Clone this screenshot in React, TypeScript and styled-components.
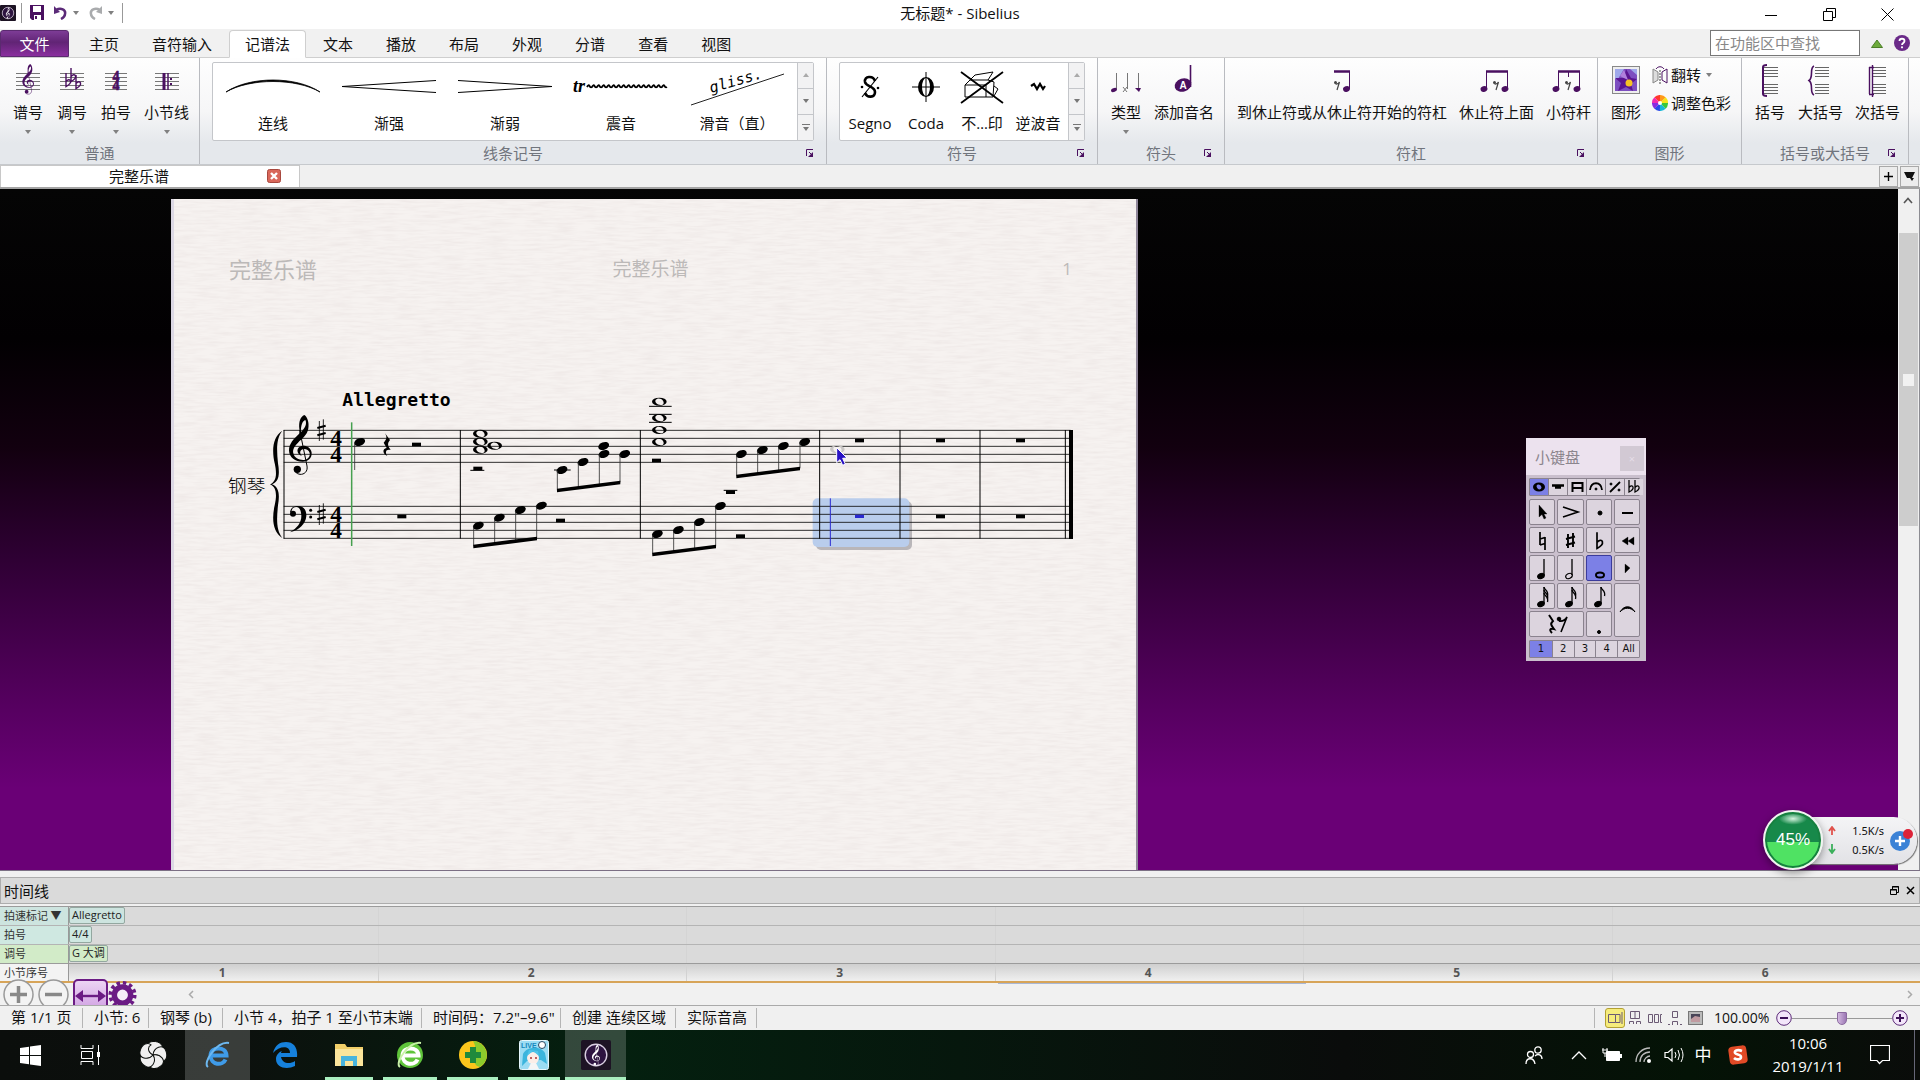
import React from "react";
import styled, { createGlobalStyle, css } from "styled-components";

const UI = `"Open Sans", "Noto Sans CJK SC", sans-serif`;
const PURPLE = "#4a1060";

const GlobalStyle = createGlobalStyle`
  * { box-sizing: border-box; }
  html, body { margin: 0; padding: 0; }
  body { font-family: ${UI}; font-size: 15px; line-height: 20px; color: #111; background: #f0f0f0; overflow: hidden; }
  button, input { font: inherit; color: inherit; margin: 0; }
  button { padding: 0; border: 0; background: none; cursor: default; }
  svg { display: block; flex: none; }
`;

const Shell = styled.div`
  display: flex;
  flex-direction: column;
  height: 100vh;
`;

/* ---------- title bar ---------- */
const TitleBar = styled.header`
  display: grid;
  grid-template-columns: 1fr auto 1fr;
  align-items: center;
  height: 29px;
  background: #fff;
`;
const QuickBar = styled.div`
  display: flex;
  align-items: center;
  height: 24px;
  margin-bottom: 4px;
`;
const QuickButton = styled.button<{ $gap?: number }>`
  display: flex;
  margin-left: ${(p) => p.$gap ?? 8}px;
`;
const QuickRule = styled.span<{ $gap: number }>`
  width: 1px;
  height: 20px;
  margin-left: ${(p) => p.$gap}px;
  background: #999;
`;
const Title = styled.h1`
  margin: 0;
  padding-bottom: 4px;
  font-size: 15px;
  font-weight: 400;
  line-height: 20px;
`;
const WindowButtons = styled.div`
  display: flex;
  justify-content: flex-end;
  padding-right: 4px;
`;
const WindowButton = styled.button`
  display: grid;
  place-items: center;
  width: 58px;
  height: 28px;
`;

/* ---------- tab strip ---------- */
const TabStrip = styled.nav`
  display: flex;
  align-items: flex-end;
  height: 29px;
  background: #f1f1f1;
  border-bottom: 1px solid #cfcfcf;
`;
const RibbonTab = styled.button<{ $on?: boolean }>`
  height: 28px;
  margin: 0 1px -1px 0;
  padding: 0 15px;
  border: 1px solid transparent;
  border-radius: 4px 4px 0 0;
  ${(p) => p.$on && css`background: #fff; border-color: #cfcfcf; border-bottom-color: #fff;`}
`;
const FileTab = styled.button`
  width: 69px;
  height: 27px;
  margin-right: 4px;
  color: #fff;
  border-radius: 3px 3px 0 0;
  border: 1px solid #5b2a70;
  background: linear-gradient(#7d3c96, #612475 45%, #8a2f9e);
`;
const SearchArea = styled.div`
  display: flex;
  align-items: center;
  height: 28px;
  margin-left: auto;
  padding-right: 10px;
  gap: 11px;
`;
const SearchBox = styled.input`
  width: 150px;
  height: 26px;
  padding: 0 4px;
  border: 1px solid #777;
  background: #fff;
  &::placeholder { color: #888; opacity: 1; }
`;
const PlainIcon = styled.button`
  display: flex;
`;

/* ---------- ribbon ---------- */
const Ribbon = styled.section`
  display: flex;
  height: 107px;
  background: linear-gradient(#fefefe, #f6f6f7 50%, #e5e8ec 80%);
  border-bottom: 1px solid #c6c9cd;
`;
const Group = styled.div<{ $w: number }>`
  display: flex;
  flex-direction: column;
  justify-content: space-between;
  min-width: ${(p) => p.$w}px;
  border-right: 1px solid #b9bbc0;
`;
const GroupBody = styled.div<{ $pad?: number }>`
  display: flex;
  align-items: flex-start;
  padding: 4px ${(p) => p.$pad ?? 0}px 0 ${(p) => p.$pad ?? 6}px;
`;
const GroupLabel = styled.div`
  display: grid;
  grid-template-columns: 24px 1fr 24px;
  align-items: center;
  height: 20px;
  margin-bottom: 1px;
  color: #71757d;
  & > span { grid-column: 2; text-align: center; }
`;
const BigButton = styled.button`
  display: flex;
  flex-direction: column;
  align-items: center;
  min-width: 44px;
  padding: 1px 6px 0;
  white-space: nowrap;
  & > svg + span { margin-top: 5px; }
`;
const Caret = styled.i`
  width: 0;
  height: 0;
  margin-top: 8px;
  border: 3px solid transparent;
  border-top: 4px solid #808080;
  border-bottom: 0;
`;
const SmallCaret = styled(Caret)`
  margin: 0 0 0 2px;
`;
const QuickCaret = styled(Caret)`
  margin: 0;
`;
const Gallery = styled.div`
  display: flex;
  height: 79px;
  border: 1px solid #c4c6ca;
  border-radius: 2px;
  background: #fff;
`;
const GalleryItems = styled.div`
  display: flex;
  padding: 0 2px;
`;
const GalleryItem = styled.button<{ $w: number }>`
  display: flex;
  flex-direction: column;
  align-items: center;
  width: ${(p) => p.$w}px;
  padding-top: 3px;
  white-space: nowrap;
  & > svg { margin-bottom: 3px; }
`;
const GalleryScroll = styled.div`
  display: flex;
  flex-direction: column;
  width: 16px;
  border-left: 1px solid #c4c6ca;
`;
const ScrollStep = styled.button`
  display: grid;
  place-items: center;
  flex: 1;
  background: #f2f2f3;
  & + & { border-top: 1px solid #c4c6ca; }
`;
const SmallStack = styled.div`
  display: flex;
  flex-direction: column;
  gap: 8px;
  padding: 3px 0 0 4px;
`;
const SmallButton = styled.button`
  display: flex;
  align-items: center;
  gap: 3px;
  height: 20px;
`;

/* ---------- document tabs ---------- */
const DocTabs = styled.div`
  display: flex;
  align-items: flex-end;
  height: 24px;
  background: #f0f0f0;
  border-bottom: 2px solid #a4a4a4;
`;
const DocTab = styled.div`
  display: grid;
  grid-template-columns: 1fr auto;
  align-items: center;
  width: 300px;
  height: 22px;
  padding: 0 18px 2px 10px;
  text-align: center;
  background: #fff;
  border: 1px solid #c8c8c8;
  border-bottom: 0;
`;
const DocTools = styled.div`
  display: flex;
  gap: 2px;
  margin-left: auto;
  padding-right: 1px;
`;
const DocTool = styled.button`
  display: grid;
  place-items: center;
  width: 19px;
  height: 21px;
  border: 1px solid #a9a9a9;
  background: #ececec;
`;

/* ---------- work area ---------- */
const Work = styled.main`
  position: relative;
  display: flex;
  flex: 1;
  min-height: 0;
  border-bottom: 1px solid #7b6f84;
`;
const Desk = styled.div`
  flex: 1;
  padding: 10px 0 0 171px;
  overflow: hidden;
  background: linear-gradient(#050505 0, #020002 22%, #12000f 38%, #2e0033 54%, #560060 76%, #6a0076 88%);
`;
const Paper = styled.article`
  position: relative;
  width: 965px;
  height: 100%;
  background: #f6f2f0;
  border-left: 3px solid #dcd8e4;
  box-shadow: 2px 0 0 #8f8699;
`;
const Grain = styled.svg`
  position: absolute;
  inset: 0;
`;
const PaperHead = styled.div`
  position: relative;
  display: grid;
  grid-template-columns: 1fr auto 1fr;
  align-items: center;
  padding: 56px 64px 0 55px;
  line-height: 28px;
  color: #bcb9b8;
`;
const HeadLeft = styled.span`
  font-size: 22px;
`;
const HeadMid = styled.span`
  font-size: 19px;
`;
const HeadRight = styled.span`
  font-size: 17px;
  text-align: right;
`;
const Score = styled.svg`
  position: absolute;
  left: 26px;
  top: 171px;
`;
const VScroll = styled.div`
  display: flex;
  flex-direction: column;
  align-items: center;
  width: 22px;
  padding: 8px 1px 0 0;
  background: #f0f0f0;
  border-right: 1px solid #8c8c92;
`;
const VThumb = styled.div`
  display: grid;
  place-items: center;
  width: 19px;
  height: 293px;
  margin-top: 29px;
  background: #cdcdcd;
  &::after { content: ""; width: 11px; height: 12px; background: #f1f1f1; }
`;

/* ---------- keypad ---------- */
const Keypad = styled.aside`
  position: absolute;
  right: 274px;
  top: 249px;
  width: 120px;
  padding: 0 6px 3px 3px;
  background: #cabfcd;
`;
const KeypadHead = styled.div`
  display: flex;
  align-items: center;
  justify-content: space-between;
  height: 37px;
  margin: 0 -6px 3px -3px;
  padding: 0 2px 0 9px;
  color: #8b858d;
  background: #ece2ee;
`;
const KeypadClose = styled.button`
  width: 24px;
  height: 25px;
  margin-top: 4px;
  font-size: 11px;
  color: #e6dde8;
  background: #d2c9d4;
`;
const KeyStrip = styled.div<{ $cols: number }>`
  display: grid;
  grid-template-columns: repeat(${(p) => p.$cols}, 1fr);
  height: 18px;
  border: 1px solid #8a828e;
  border-radius: 1px;
  font-family: "DejaVu Sans", sans-serif;
  font-size: 10px;
  line-height: 16px;
`;
const StripKey = styled.button<{ $on?: boolean }>`
  display: grid;
  place-items: center;
  background: ${(p) => (p.$on ? "#7c80e6" : "#dcd4de")};
  & + & { border-left: 1px solid #8a828e; }
`;
const KeyGrid = styled.div`
  display: grid;
  grid-template-columns: repeat(4, 1fr);
  grid-auto-rows: 26px;
  gap: 2px;
  margin: 3px 0;
`;
const Key = styled.button<{ $on?: boolean; $cols?: number; $rows?: number }>`
  display: grid;
  place-items: center;
  grid-column: span ${(p) => p.$cols ?? 1};
  grid-row: span ${(p) => p.$rows ?? 1};
  border: 1px solid ${(p) => (p.$on ? "#3c3c9c" : "#8a828e")};
  border-radius: 2px;
  background: ${(p) => (p.$on ? "#7c80e6" : "#dcd4de")};
`;

/* ---------- net monitor ---------- */
const Monitor = styled.aside`
  position: absolute;
  right: 3px;
  bottom: 0;
  display: flex;
  align-items: center;
  z-index: 2;
`;
const Ball = styled.div`
  display: grid;
  place-items: center;
  width: 60px;
  height: 60px;
  margin-right: -24px;
  position: relative;
  border: 2px solid #f0f4f0;
  border-radius: 50%;
  color: #fff;
  font-family: "Liberation Sans", sans-serif;
  font-size: 17px;
  background: radial-gradient(ellipse 14px 6px at 50% 12%, #d5f3df, transparent), linear-gradient(#17894a 0 54%, #4fe263 54%);
  box-shadow: inset 0 0 0 2px #16803f, 0 3px 8px #0006;
`;
const Pill = styled.div`
  display: grid;
  grid-template-columns: 8px 1fr 24px;
  column-gap: 6px;
  align-items: center;
  width: 118px;
  height: 47px;
  padding: 0 3px 0 29px;
  border-radius: 0 24px 24px 0;
  background: linear-gradient(#f4f4f6, #e2e2e6);
  box-shadow: 1px 1px 1px #777;
`;
const Rates = styled.div`
  display: flex;
  flex-direction: column;
  text-align: right;
  font-family: "Noto Sans", sans-serif;
  font-size: 11px;
  line-height: 19px;
`;

/* ---------- timeline ---------- */
const Timeline = styled.section`
  position: relative;
  padding-top: 6px;
`;
const TimelineHead = styled.div`
  display: flex;
  align-items: center;
  height: 27px;
  padding: 0 4px 0 3px;
  background: #dadada;
  border: 1px solid #adadad;
  & > span { flex: 1; }
`;
const HeadButton = styled.button`
  display: flex;
  margin-left: 7px;
`;
const Lanes = styled.div`
  margin-top: 2px;
  border-top: 1px solid #9b9b9b;
  border-bottom: 2px solid #d7a458;
`;
const Lane = styled.div<{ $last?: boolean }>`
  display: grid;
  grid-template-columns: 69px 1fr;
  height: 19px;
  border-bottom: 1px solid #b4b4b4;
  ${(p) => p.$last && css`height: 18px; border-top: 1px solid #9b9b9b; margin-top: -1px;`}
`;
const LaneName = styled.div<{ $bg: string }>`
  padding-left: 4px;
  font-family: "Noto Sans CJK SC", sans-serif;
  font-size: 11px;
  line-height: 17px;
  white-space: nowrap;
  color: #333;
  background: ${(p) => p.$bg};
  border-right: 1px solid #999;
`;
const LaneTrack = styled.div<{ $numbers?: boolean }>`
  display: grid;
  grid-template-columns: repeat(6, 1fr);
  background: ${(p) => (p.$numbers ? "linear-gradient(#cfcfcf, #f0f0f0)" : "#dadada")};
`;
const Measure = styled.div`
  text-align: center;
  font-size: 12px;
  font-weight: 700;
  line-height: 17px;
  color: #555;
  padding-right: 2px;
  & + & { border-left: 1px solid #d2d2d2; }
`;
const Chip = styled.span<{ $bg: string }>`
  display: inline-block;
  height: 17px;
  padding: 0 2px;
  border: 1px solid #93a7a0;
  border-radius: 2px;
  background: ${(p) => p.$bg};
  font-size: 11px;
  line-height: 14px;
  color: #222;
`;
const ChipCell = styled.div`
  display: flex;
  & + & { border-left: 1px solid #d4d4d4; }
`;
const TimelineScroll = styled.div`
  display: flex;
  align-items: center;
  justify-content: space-between;
  height: 23px;
  padding: 0 7px 0 188px;
  background: linear-gradient(90deg, transparent 52%, #a9b8d6 52% 68%, transparent 68%) top / 100% 1px no-repeat #f1f1f1;
  border-bottom: 1px solid #aaa;
`;
const TimelineTools = styled.div`
  position: absolute;
  left: 3px;
  bottom: 1px;
  display: flex;
  align-items: flex-start;
  height: 26px;
  overflow: hidden;
`;
const RoundTool = styled.button`
  display: flex;
  margin-right: 4px;
`;
const FitTool = styled.button`
  display: grid;
  place-items: center;
  width: 35px;
  height: 34px;
  border: 2px solid #6b1b84;
  border-radius: 5px;
  background: linear-gradient(#ecd4f4, #cf9fe2);
`;

/* ---------- status bar ---------- */
const Status = styled.footer`
  display: flex;
  align-items: center;
  height: 24px;
  padding-right: 12px;
  background: #f0f0f0;
`;
const StatusItem = styled.span<{ $w: number }>`
  width: ${(p) => p.$w}px;
  height: 20px;
  padding-left: 11px;
  line-height: 19px;
  white-space: nowrap;
  border-right: 1px solid #b5b5b5;
`;
const StatusRight = styled.div`
  display: flex;
  align-items: center;
  margin-left: auto;
  padding-left: 10px;
  border-left: 1px solid #b5b5b5;
`;
const ViewButton = styled.button<{ $on?: boolean }>`
  display: grid;
  place-items: center;
  width: 20px;
  height: 20px;
  border-radius: 3px;
  border: 1px solid ${(p) => (p.$on ? "#b3a032" : "transparent")};
  background: ${(p) => (p.$on ? "#f6ec7c" : "none")};
`;
const Percent = styled.label`
  width: 71px;
  padding-left: 9px;
  font-size: 14px;
`;
const ZoomStep = styled.button`
  display: flex;
`;
const ZoomSlider = styled.input`
  width: 100px;
  height: 18px;
  appearance: none;
  background: linear-gradient(#999, #999) center / 100% 1px no-repeat;
  &::-webkit-slider-thumb {
    appearance: none;
    width: 10px;
    height: 13px;
    border: 1px solid #8b6aa0;
    border-radius: 1px 1px 5px 5px;
    background: linear-gradient(90deg, #d2b8e0, #9c78b4);
  }
`;

/* ---------- taskbar ---------- */
const Taskbar = styled.footer`
  display: flex;
  align-items: stretch;
  height: 50px;
  color: #fff;
  background: linear-gradient(90deg, #0b0e0c 0, #0c100d 12%, #04200f 32%, #06170d 50%, #0a0c0b 70%, #041306 88%, #0a0c0a);
`;
const Task = styled.button<{ $w: number; $run?: boolean; $on?: boolean }>`
  display: grid;
  place-items: center;
  width: ${(p) => p.$w}px;
  background: ${(p) => (p.$on ? "#ffffff30" : "none")};
  position: relative;
  ${(p) => p.$run && css`
    &::after { content: ""; position: absolute; left: ${p.$on ? 0 : 5}px; right: ${p.$on ? 0 : 5}px; bottom: 0; height: 3px; background: #a9efbf; }
  `}
`;
const Tray = styled.div`
  display: flex;
  align-items: center;
  margin-left: auto;
`;
const TrayButton = styled.button<{ $w: number; $after?: number }>`
  display: grid;
  place-items: center;
  width: ${(p) => p.$w}px;
  height: 50px;
  margin-right: ${(p) => p.$after ?? 0}px;
  font-size: 17px;
`;
const Clock = styled.time`
  width: 94px;
  text-align: center;
  line-height: 23px;
`;
const ShowDesktop = styled.button`
  width: 6px;
  height: 50px;
  border-left: 1px solid #667;
`;

/* ---------- shared musical drawings ---------- */
const CLEF =
  "M313 135C322 140 328 158 325 175C322 196 306 206 294 218C284 228 277 238 280 250C283 264 298 271 312 270C326 268 331 258 329 249C327 240 318 236 310 237C300 239 297 250 306 258C292 254 288 238 298 231C312 222 332 230 335 248C336 264 324 275 308 275C286 275 268 262 267 242C266 222 282 206 296 193C300 188 299 183 298 176C296 156 301 140 313 135ZM316 150C308 152 302 166 303 186C314 176 322 162 316 150Z";

const Clef = ({ color = "#000" }: { color?: string }) => (
  <g fill={color}>
    <path d={CLEF} fillRule="evenodd" />
    <path d="M299 180L321 288C324 305 312 314 300 313C290 312 284 305 284 298" fill="none" stroke={color} strokeWidth="3" />
    <circle cx="292" cy="298" r="11" />
  </g>
);

const Head = ({ x, y, s = 1 }: { x: number; y: number; s?: number }) => (
  <ellipse cx={x} cy={y} rx={17 * s} ry={11 * s} transform={`rotate(-22 ${x} ${y})`} />
);
const Whole = ({ x, y }: { x: number; y: number }) => (
  <path
    fillRule="evenodd"
    d={`M${x - 22} ${y}a22 12 0 1 0 44 0a22 12 0 1 0 -44 0ZM${x - 11} ${y - 5}C${x - 7} ${y - 12} ${x + 6} ${y - 11} ${x + 11} ${y - 3}C${x + 16} ${y + 5} ${x + 11} ${y + 11} ${x + 4} ${y + 10}C${x - 6} ${y + 9} ${x - 15} ${y + 2} ${x - 11} ${y - 5}Z`}
  />
);
const Sharp = ({ x, y }: { x: number; y: number }) => (
  <g stroke="#000" fill="none">
    <path d={`M${x - 6} ${y - 28}V${y + 32}M${x + 6} ${y - 33}V${y + 28}`} strokeWidth="2.5" />
    <path d={`M${x - 12} ${y - 7}L${x + 13} ${y - 14}M${x - 12} ${y + 15}L${x + 13} ${y + 8}`} strokeWidth="6" />
  </g>
);
const Run = ({ notes, from, to, drop }: { notes: number[][]; from: number; to: number; drop: number }) => (
  <g>
    {notes.map(([x, y], i) => {
      const end = from + ((to - from) * (x - notes[0][0])) / drop;
      return (
        <g key={i}>
          <Head x={x} y={y} />
          <path d={`M${x - 14} ${y + 2}V${end}`} stroke="#333" strokeWidth="2.5" />
        </g>
      );
    })}
    <path
      d={`M${notes[0][0] - 15} ${from - 5}L${notes[0][0] + drop - 13} ${to - 5}v11L${notes[0][0] - 15} ${from + 6}Z`}
    />
  </g>
);

const STAFF = [181, 205, 229, 253, 277, 409, 433, 457, 481, 505];
const REST_BARS = [
  [636, 218], [592, 434], [820, 290], [1068, 446], [1356, 266], [1608, 493], [1578, 361],
  [1965, 206], [2208, 206], [2448, 206], [2208, 434], [2448, 434],
];

const ScoreDrawing = () => (
  <Score width="880" height="200" viewBox="0 0 2640 600" role="img" aria-label="钢琴">
    <rect x="1848" y="394" width="288" height="146" rx="15" fill="#b9b6b9" />
    <rect x="1838" y="385" width="290" height="146" rx="15" fill="#b9cdec" />
    <g stroke="#111" strokeWidth="2.6">
      {STAFF.map((y) => (
        <path key={y} d={`M251 ${y}H2612`} />
      ))}
    </g>
    <path d="M252 180V506M781 180V506M1321 180V506M1859 180V506M2100 180V506M2340 180V506M2596 180V506" stroke="#000" strokeWidth="3" />
    <rect x="2607" y="180" width="12" height="327" />
    <path d="M247 182C218 200 215 240 224 280C232 315 228 335 210 343C228 351 232 371 224 406C215 446 218 486 247 504C228 480 230 446 234 406C240 371 236 351 216 343C236 335 240 315 234 280C230 240 228 206 247 182Z" />
    <Clef />
    <path d="M270 428C271 412 284 408 294 408C310 408 320 420 319 438C317 462 298 480 270 487C292 474 305 458 304 436C303 420 298 411 289 411C280 411 275 417 275 424Z" />
    <circle cx="279" cy="431" r="9" />
    <circle cx="332" cy="421" r="4.5" />
    <circle cx="332" cy="441" r="4.5" />
    <Sharp x={364} y={181} />
    <Sharp x={364} y={433} />
    <g fontFamily="Liberation Serif, serif" fontWeight="700" fontSize="70" textAnchor="middle">
      <text x="408" y="228">4</text>
      <text x="408" y="276">4</text>
      <text x="408" y="456">4</text>
      <text x="408" y="504">4</text>
    </g>
    <text x="427" y="107" fontFamily="DejaVu Sans Mono, monospace" fontWeight="700" fontSize="54">Allegretto</text>
    <text x="84" y="369" fontFamily="Noto Sans CJK SC, sans-serif" fontWeight="300" fontSize="56">钢琴</text>
    <path d="M455 157V528" stroke="#46a04f" strokeWidth="4.5" />
    <Head x={479} y={216} />
    <path d="M464 218V300" stroke="#333" strokeWidth="2.5" />
    <path d="M555 190L570 210C562 220 562 226 572 240C558 236 554 246 562 258C548 252 546 236 560 234L551 218C560 208 562 202 555 190Z" />
    {REST_BARS.map(([x, y]) => (
      <rect key={`${x}-${y}`} x={x} y={y} width="27" height="11" />
    ))}
    <path d="M811 301H853M1062 300H1112M1571 361H1612M1347 109H1415M1347 133H1415M1347 157H1415" stroke="#000" strokeWidth="3" />
    <Whole x={841} y={191} />
    <Whole x={841} y={215} />
    <Whole x={841} y={239} />
    <Whole x={884} y={227} />
    <Run notes={[[1086, 300], [1149, 276], [1212, 252], [1274, 252]]} from={361} to={337} drop={188} />
    <Head x={1211} y={228} />
    <Run notes={[[835, 467], [898, 443], [961, 420], [1024, 407]]} from={529} to={505} drop={189} />
    <Whole x={1378} y={95} />
    <Whole x={1378} y={144} />
    <Whole x={1378} y={180} />
    <Whole x={1378} y={216} />
    <Run notes={[[1624, 252], [1687, 240], [1750, 228], [1814, 216]]} from={319} to={295} drop={189} />
    <Run notes={[[1372, 492], [1435, 480], [1498, 456], [1561, 408]]} from={553} to={529} drop={189} />
    <rect x="1965" y="434" width="27" height="10" fill="#2a2ad0" />
    <path d="M1891 385V528" stroke="#2a2ad0" strokeWidth="3" />
    <g fill="#c9c6c5"><Whole x={1912} y={238} /></g>
    <path d="M1910 233V278L1920 269L1928 286L1936 282L1928 265L1941 264Z" fill="#2912c4" stroke="#fff" strokeWidth="3" />
  </Score>
);

/* ---------- ribbon icons ---------- */
const IconSvg = styled.svg`
  overflow: visible;
`;
const Icon = ({ w = 32, h = 34, children }: { w?: number; h?: number; children: React.ReactNode }) => (
  <IconSvg width={w} height={h} viewBox={`0 0 ${w} ${h}`} fill="none" aria-hidden="true">{children}</IconSvg>
);
const lines = (x1: number, x2: number) => (
  <path d={`M${x1} 10.5H${x2}M${x1} 14.5H${x2}M${x1} 18.5H${x2}M${x1} 22.5H${x2}M${x1} 26.5H${x2}`} stroke="#777" />
);
const Flat = ({ x, y, c = PURPLE, k = 1 }: { x: number; y: number; c?: string; k?: number }) => (
  <path transform={`translate(${x} ${y}) scale(${k})`} d="M0 -9V4.500C3 3 5 1 4.500 -1C4 -3 1.500 -2.500 0 -.5" stroke={c} strokeWidth="1.400" fill="none" />
);
const EighthRest = ({ x, y }: { x: number; y: number }) => (
  <g transform={`translate(${x} ${y})`}>
    <circle cx="1.500" cy="1.500" r="1.500" fill="#444" />
    <path d="M1.500 3C4 3.500 5 2 5.500 1L3 9" stroke="#444" strokeWidth="1.200" />
  </g>
);
const BeamIcon = ({ left, mid }: { left: boolean; mid?: boolean }) => (
  <Icon>
    <path d={left ? "M5 8.500H27" : "M8 8.500H24"} stroke={PURPLE} strokeWidth="2.500" />
    <path d={left ? "M5.500 8V26M26.500 8V26" : "M23.500 8V26"} stroke={PURPLE} />
    {mid && <path d="M15.500 8V14" stroke={PURPLE} />}
    <g fill={PURPLE}>
      {left && <ellipse cx="3" cy="26" rx="3.500" ry="2.800" transform="rotate(-20 3 26)" />}
      <ellipse cx={left ? 24 : 20.5} cy="26" rx="3.500" ry="2.800" transform={`rotate(-20 ${left ? 24 : 20.5} 26)`} />
    </g>
    <EighthRest x={left ? 12 : 8} y={18} />
  </Icon>
);
const BracketIcon = ({ kind }: { kind: "bracket" | "brace" | "sub" }) => (
  <Icon w={28}>
    <path d="M8 4.500H22M8 7.500H22M8 10.500H22M8 13.500H22M8 21.500H22M8 24.500H22M8 27.500H22M8 30.500H22" stroke="#666" />
    {kind === "bracket" && <path d="M11 2C8 2 7 3 7 4V31C7 32 8 33 11 33M7 4V31" stroke={PURPLE} strokeWidth="2" />}
    {kind === "brace" && <path d="M7 3C2 5 7 14 2 17.500C7 21 2 30 7 32" stroke={PURPLE} strokeWidth="1.600" />}
    {kind === "sub" && <path d="M5 4.500H10M5.500 4V31M8.500 2V34M5 31.500H10" stroke={PURPLE} strokeWidth="1.400" />}
  </Icon>
);
const Launch = () => (
  <PlainIcon aria-label="更多选项">
    <svg width="22" height="10" viewBox="0 0 22 10" fill="none">
      <path d="M4.500 8V1.500H11M7 4L10 7" stroke={PURPLE} />
      <path d="M11 4V9H6Z" fill={PURPLE} />
    </svg>
  </PlainIcon>
);
const Footer = ({ text, launch = true }: { text: string; launch?: boolean }) => (
  <GroupLabel>
    <span>{text}</span>
    {launch && <Launch />}
  </GroupLabel>
);
const Steps = () => (
  <GalleryScroll>
    {["M1 5L4 1L7 5Z", "M1 1L4 5L7 1Z", "M1 3L4 7L7 3ZM0 0H8V1H0Z"].map((d, i) => (
      <ScrollStep key={d} aria-label="滚动">
        <svg width="8" height="7" viewBox="0 0 8 7"><path d={d} fill={i ? "#777" : "#aaa"} /></svg>
      </ScrollStep>
    ))}
  </GalleryScroll>
);

const SibeliusMark = ({ size }: { size: number }) => (
  <svg width={size} height={size} viewBox="0 0 32 32" aria-hidden="true">
    <rect width="32" height="32" rx="2" fill="#1d1324" />
    <circle cx="16" cy="16" r="11.500" fill="#2d1440" stroke="#d9cfe2" strokeWidth="1.500" />
    <g transform="translate(-22 -12) scale(.126)"><Clef color="#fff" /></g>
  </svg>
);

const LINES = [
  ["连线", <path key="a" d="M1 26C25 10 71 10 95 26C71 12 25 12 1 26Z" fill="#000" stroke="#000" strokeWidth=".8" />],
  ["渐强", <path key="b" d="M95 14.500L1 20.500L95 26.500" stroke="#000" />],
  ["渐弱", <path key="c" d="M1 14.500L95 20.500L1 26.500" stroke="#000" />],
  [
    "震音",
    <g key="d">
      <text x="0" y="26" fontFamily="Liberation Serif, serif" fontWeight="700" fontStyle="italic" fontSize="18" fill="#000">tr</text>
      <path d={"M14 21" + "q1.500 -3 2.500 -1t2.500 1".repeat(16)} stroke="#000" strokeWidth="1.800" />
    </g>,
  ],
  [
    "滑音（直）",
    <g key="e">
      <path d="M2 39L95 8" stroke="#222" />
      <text x="22" y="27" transform="rotate(-16 22 27)" fontFamily="DejaVu Sans Mono, monospace" fontStyle="italic" fontSize="15" fill="#000">gliss.</text>
    </g>,
  ],
] as const;

const SYMBOLS = [
  [
    "Segno",
    <g key="a" stroke="#000">
      <path d="M29 15C27 9 18 10 19 16C20 21 29 20 29 26C29 32 21 32 19 27" strokeWidth="2.600" />
      <path d="M32 11L16 31" strokeWidth="1.200" />
      <circle cx="16" cy="21" r="1.300" fill="#000" stroke="none" /><circle cx="32" cy="22" r="1.300" fill="#000" stroke="none" />
    </g>,
  ],
  [
    "Coda",
    <g key="b" stroke="#000">
      <path d="M24 6V36M10 21H38" />
      <path fillRule="evenodd" d="M16 21a8 10 0 1 0 16 0a8 10 0 1 0 -16 0ZM20 21a4 9 0 1 0 8 0a4 9 0 1 0 -8 0Z" fill="#000" stroke="none" />
    </g>,
  ],
  [
    "不…印",
    <g key="c" stroke="#000">
      <path d="M3 6L45 37M45 6L3 37" strokeWidth="1.800" />
      <path d="M7 19L17 9L35 6L30 14L36 16L35 31H7ZM7 19H28L35 13M28 19V31M12 14L30 14M36 20L40 23L36 30" />
    </g>,
  ],
  ["逆波音", <path key="d" d="M17 20L20 18L23 23L26 18L29 23L31 20" stroke="#000" strokeWidth="2.200" />],
] as const;

/* ---------- keypad glyphs ---------- */
const Glyph = ({ children, w = 22, h = 24 }: { children: React.ReactNode; w?: number; h?: number }) => (
  <svg width={w} height={h} viewBox={`0 0 ${w} ${h}`} fill="none" stroke="#000" aria-hidden="true">{children}</svg>
);
const KNote = ({ flags = 0, open = false }: { flags?: number; open?: boolean }) => (
  <Glyph>
    <ellipse cx="10" cy="20" rx="3.400" ry="2.400" transform="rotate(-25 10 20)" fill={open ? "none" : "#000"} strokeWidth="1.200" />
    <path d="M13 19V3" strokeWidth="1.300" />
    {Array.from({ length: flags }, (_, i) => (
      <path key={i} d={`M13 ${3 + i * 3}c0 3 5 3 3.500 9`} strokeWidth="1.300" />
    ))}
  </Glyph>
);

const KEYS: { id: string; g: React.ReactNode; on?: boolean; c?: number; r?: number }[] = [
  { id: "选择", g: <Glyph><path d="M8 5V17L11 14.500L13 19L15 18L13 14H16Z" fill="#000" strokeWidth=".3" /></Glyph> },
  { id: "重音", g: <Glyph><path d="M4 7L19 12L4 17" strokeWidth="1.600" /></Glyph> },
  { id: "断奏", g: <Glyph><circle cx="12" cy="13" r="2" fill="#000" /></Glyph> },
  { id: "保持", g: <Glyph><path d="M6 13H17" strokeWidth="2" /></Glyph> },
  { id: "还原", g: <Glyph><path d="M9 4V17M14 9V22M9 11L14 9.500M9 17L14 15.500" strokeWidth="1.700" /></Glyph> },
  { id: "升号", g: <Glyph><path d="M9 6V20M14 5V19M7 11L16 8.500M7 17L16 14.500" strokeWidth="1.900" /></Glyph> },
  { id: "降号", g: <Glyph><Flat x={9} y={15} c="#000" k={1.2} /></Glyph> },
  { id: "返回", g: <Glyph><path d="M12 9L6 13L12 17ZM18 9L12 13L18 17Z" fill="#000" strokeWidth=".3" /></Glyph> },
  { id: "四分", g: <KNote /> },
  { id: "二分", g: <KNote open /> },
  { id: "全音符", on: true, g: <Glyph><ellipse cx="12" cy="19" rx="4" ry="2.500" strokeWidth="2" /></Glyph> },
  { id: "前进", g: <Glyph><path d="M9 8L14 12L9 17Z" fill="#000" strokeWidth=".3" /></Glyph> },
  { id: "三十二分", g: <KNote flags={3} /> },
  { id: "十六分", g: <KNote flags={2} /> },
  { id: "八分", g: <KNote flags={1} /> },
  { id: "连音线", r: 2, g: <Glyph><path d="M4 14C8 7 15 7 19 14C15 9 8 9 4 14Z" fill="#000" /></Glyph> },
  { id: "休止符", c: 2, g: <Glyph w={30}><path d="M8 3L12 9C9 12 10 13 13 17C9 16 8 18 11 21" strokeWidth="2" /><circle cx="18" cy="7" r="1.800" fill="#000" /><path d="M18 9Q23 10 26 5L20 20" strokeWidth="1.600" /></Glyph> },
  { id: "附点", g: <Glyph><circle cx="11" cy="20" r="1.500" fill="#000" /></Glyph> },
];
const STRIP = [
  <path key="0" fillRule="evenodd" d="M3 8a6 4.500 0 1 0 12 0a6 4.500 0 1 0 -12 0ZM6.500 7C7 4.500 11 5 11.500 8.500C11 11.500 7 11 6.500 7Z" fill="#000" stroke="none" />,
  <path key="1" d="M3 6.500H15M6 8.500H12" strokeWidth="2.400" />,
  <path key="2" d="M4 4H15M4 9H15M4.500 3V13M14.500 3V13" strokeWidth="2" />,
  <g key="3"><path d="M3 11C4 2 14 2 15 11" strokeWidth="1.800" /><circle cx="9" cy="10" r="1" fill="#000" /></g>,
  <g key="4"><path d="M4 13L14 3" strokeWidth="1.800" /><circle cx="5" cy="5" r="1" fill="#000" /><circle cx="13" cy="11" r="1" fill="#000" /></g>,
  <g key="5"><Flat x={4} y={9} c="#000" k={0.9} /><Flat x={10} y={9} c="#000" k={0.9} /></g>,
];

const VIEWS = [
  "M1.500 4.500H8.500V12.500H1.500ZM8.500 4.500H13V12.500H8.500M15 2V14",
  "M3.500 1.500H12.500V8.500H3.500ZM8 1.500V8.500M2.500 14V11.500H6.500V14M9.500 14V11.500H13.500V14",
  "M1.500 4.500H5.500V12.500H1.500ZM7.500 4.500H11.500V12.500H7.500ZM15 4.500H13.500V12.500H15",
  "M5.500 1.500H10.500V7.500H5.500ZM5.500 15V11.500H10.500V15M1 14.500H3M13 14.500H15",
];

const MEASURES = [1, 2, 3, 4, 5, 6];
const LANES = [
  { name: "拍速标记 ▼", bg: "#cde4df", chip: "Allegretto" },
  { name: "拍号", bg: "#cfe8e1", chip: "4/4" },
  { name: "调号", bg: "#d2ebc8", chip: "G 大调" },
];

const EGlyph = ({ a, b, ring }: { a: string; b: string; ring?: boolean }) => (
  <svg width="30" height="30" viewBox="0 0 30 30" fill="none" aria-hidden="true">
    {ring && <circle cx="15" cy="15" r="13" fill="#5fc43a" />}
    <path d="M7 15.500H23.500C23 6 8 6 7.500 15.500C7.500 25.500 20 26 22.500 19.500" stroke={ring ? "#fff" : a} strokeWidth="4" />
    <path d="M5 27C-1 23 14 1 26 3" stroke={b} strokeWidth="2" />
  </svg>
);

export default function App() {
  return (
    <Shell>
      <GlobalStyle />
      <TitleBar>
        <QuickBar>
          <SibeliusMark size={16} />
          <QuickRule $gap={5} />
          <QuickButton aria-label="保存">
            <svg width="14" height="15" viewBox="0 0 14 15"><path d="M0 0H14V15H2L0 13Z" fill={PURPLE} /><path d="M3 1H11V7H3ZM4 10H11V15H4Z" fill="#fff" /><path d="M5 11H7V14H5Z" fill={PURPLE} /></svg>
          </QuickButton>
          <QuickButton aria-label="撤销" $gap={9}>
            <svg width="14" height="14" viewBox="0 0 14 14" fill="none"><path d="M3 4C8 1 13 4 12 8C12 10 10 12 8 13" stroke="#5b2a78" strokeWidth="2.500" /><path d="M1 0V8L7 6Z" fill="#5b2a78" /></svg>
          </QuickButton>
          <QuickButton aria-label="撤销列表" $gap={6}><QuickCaret /></QuickButton>
          <QuickButton aria-label="重做" $gap={10}>
            <svg width="14" height="14" viewBox="0 0 14 14" fill="none"><path d="M11 4C6 1 1 4 2 8C2 10 4 12 6 13" stroke="#a9abad" strokeWidth="2.500" /><path d="M13 0V8L7 6Z" fill="#a9abad" /></svg>
          </QuickButton>
          <QuickButton aria-label="重做列表" $gap={5}><QuickCaret /></QuickButton>
          <QuickRule $gap={8} />
        </QuickBar>
        <Title>无标题* - Sibelius</Title>
        <WindowButtons>
          <WindowButton aria-label="最小化"><svg width="12" height="12"><path d="M0 6.500H12" stroke="#000" /></svg></WindowButton>
          <WindowButton aria-label="还原"><svg width="13" height="13" fill="none"><path d="M.5 3.500H9.500V12.500H.5ZM3.500 3V.5H12.500V9.500H10" stroke="#000" /></svg></WindowButton>
          <WindowButton aria-label="关闭"><svg width="13" height="13"><path d="M.5 .5L12.500 12.500M12.500 .5L.5 12.500" stroke="#000" /></svg></WindowButton>
        </WindowButtons>
      </TitleBar>

      <TabStrip>
        <FileTab>文件</FileTab>
        {["主页", "音符输入", "记谱法", "文本", "播放", "布局", "外观", "分谱", "查看", "视图"].map((t) => (
          <RibbonTab key={t} $on={t === "记谱法"}>{t}</RibbonTab>
        ))}
        <SearchArea>
          <SearchBox placeholder="在功能区中查找" aria-label="在功能区中查找" />
          <PlainIcon aria-label="折叠功能区"><svg width="12" height="9"><path d="M6 1L11.500 8.500H.5Z" fill="#6dab3c" stroke="#4c7f28" /></svg></PlainIcon>
          <PlainIcon aria-label="帮助">
            <svg width="16" height="16" viewBox="0 0 16 16"><circle cx="8" cy="8" r="8" fill="#6a2a88" /><path d="M5.500 6C5.500 3 10.500 3 10.500 6C10.500 8 8 8 8 10" stroke="#fff" strokeWidth="1.800" fill="none" /><circle cx="8" cy="12.300" r="1.100" fill="#fff" /></svg>
          </PlainIcon>
        </SearchArea>
      </TabStrip>

      <Ribbon>
        <Group $w={200}>
          <GroupBody>
            <BigButton><Icon>{lines(4, 28)}<g transform="translate(-35 -22) scale(.17)"><Clef color={PURPLE} /></g></Icon><span>谱号</span><Caret /></BigButton>
            <BigButton><Icon>{lines(4, 28)}<Flat x={10} y={19} /><Flat x={15} y={14} /><Flat x={20} y={21} /></Icon><span>调号</span><Caret /></BigButton>
            <BigButton>
              <Icon>{lines(5, 27)}<g fill={PURPLE} stroke={PURPLE} strokeWidth=".6" fontFamily="Liberation Serif, serif" fontWeight="700" fontSize="14" textAnchor="middle"><text x="16" y="18">4</text><text x="16" y="27">4</text></g></Icon>
              <span>拍号</span><Caret />
            </BigButton>
            <BigButton><Icon>{lines(4, 28)}<path d="M13 10V27" stroke={PURPLE} strokeWidth="3" /><path d="M17 10V27" stroke={PURPLE} strokeWidth="1.500" /><path d="M20 15V17M20 20V22" stroke={PURPLE} strokeWidth="2" /></Icon><span>小节线</span><Caret /></BigButton>
          </GroupBody>
          <Footer text="普通" launch={false} />
        </Group>
        <Group $w={627}>
          <GroupBody $pad={12}>
            <Gallery>
              <GalleryItems>
                {LINES.map(([name, art]) => (
                  <GalleryItem key={name} $w={116}><Icon w={96} h={44}>{art}</Icon><span>{name}</span></GalleryItem>
                ))}
              </GalleryItems>
              <Steps />
            </Gallery>
          </GroupBody>
          <Footer text="线条记号" />
        </Group>
        <Group $w={271}>
          <GroupBody $pad={12}>
            <Gallery>
              <GalleryItems>
                {SYMBOLS.map(([name, art]) => (
                  <GalleryItem key={name} $w={56}><Icon w={48} h={44}>{art}</Icon><span>{name}</span></GalleryItem>
                ))}
              </GalleryItems>
              <Steps />
            </Gallery>
          </GroupBody>
          <Footer text="符号" />
        </Group>
        <Group $w={127}>
          <GroupBody>
            <BigButton>
              <Icon><path d="M6.500 10V26M17.500 10V26M28.500 10V26" stroke="#777" /><g fill={PURPLE}><Head x={4} y={27} s={0.18} /><path d="M25 25H31L29 29Z" /></g><path d="M13 24L17 29M17 24L13 29" stroke="#777" /></Icon>
              <span>类型</span><Caret />
            </BigButton>
            <BigButton>
              <Icon><path d="M22.500 2V24" stroke={PURPLE} strokeWidth="1.600" /><ellipse cx="15" cy="22" rx="8.500" ry="6.500" transform="rotate(-18 15 22)" fill={PURPLE} /><text x="15" y="26" textAnchor="middle" fontFamily="Liberation Sans, sans-serif" fontWeight="700" fontSize="10" fill="#fff">A</text></Icon>
              <span>添加音名</span>
            </BigButton>
          </GroupBody>
          <Footer text="符头" />
        </Group>
        <Group $w={373}>
          <GroupBody>
            <BigButton><BeamIcon left={false} /><span>到休止符或从休止符开始的符杠</span></BigButton>
            <BigButton><BeamIcon left /><span>休止符上面</span></BigButton>
            <BigButton><BeamIcon left mid /><span>小符杆</span></BigButton>
          </GroupBody>
          <Footer text="符杠" />
        </Group>
        <Group $w={144}>
          <GroupBody>
            <BigButton>
              <Icon>
                <rect x="2.500" y="3.500" width="27" height="27" fill="#eee" stroke="#888" /><rect x="5" y="6" width="22" height="22" fill="#7d4fc0" />
                <path d="M5 6H14L8 16H5ZM20 6H27V12Z" fill="#9fa8ea" /><path d="M16 6L21 15L27 16L21 21L23 28L16 24L8 28L11 20L5 15L14 15Z" fill="#5a1591" /><path d="M14 7L18 17L10 13Z" fill="#b080dc" /><circle cx="19" cy="20" r="3.500" fill="#f6c224" />
              </Icon>
              <span>图形</span>
            </BigButton>
            <SmallStack>
              <SmallButton>
                <svg width="16" height="18" viewBox="0 0 16 18" fill="none"><path d="M1 3L6 6V14L1 17Z" fill="#ddd" stroke="#888" /><path d="M15 3L10 6V14L15 17Z" stroke={PURPLE} /><path d="M8 4V18" stroke="#444" strokeDasharray="2 1" /><path d="M4 3C6 0 10 0 12 3" stroke={PURPLE} /></svg>
                翻转<SmallCaret />
              </SmallButton>
              <SmallButton>
                <svg width="16" height="16" viewBox="0 0 16 16">
                  {["#ff3a2a", "#ff9a1a", "#f4e61a", "#3ac83a", "#18b8d8", "#2a4ae8", "#8a2ae0", "#f02ab0"].map((c, i) => (
                    <path key={c} d="M8 8L4.900 .6A8 8 0 0 1 11.100 .6Z" fill={c} transform={`rotate(${i * 45 - 22} 8 8)`} />
                  ))}
                  <circle cx="8" cy="8" r="2" fill="#fff" />
                </svg>
                调整色彩
              </SmallButton>
            </SmallStack>
          </GroupBody>
          <Footer text="图形" launch={false} />
        </Group>
        <Group $w={167}>
          <GroupBody>
            <BigButton><BracketIcon kind="bracket" /><span>括号</span></BigButton>
            <BigButton><BracketIcon kind="brace" /><span>大括号</span></BigButton>
            <BigButton><BracketIcon kind="sub" /><span>次括号</span></BigButton>
          </GroupBody>
          <Footer text="括号或大括号" />
        </Group>
      </Ribbon>

      <DocTabs>
        <DocTab>
          <span>完整乐谱</span>
          <PlainIcon aria-label="关闭乐谱"><svg width="14" height="14" viewBox="0 0 14 14"><rect x=".5" y=".5" width="13" height="13" rx="2" fill="#d9675a" stroke="#a8483e" /><path d="M4 4L10 10M10 4L4 10" stroke="#fff" strokeWidth="2.400" /></svg></PlainIcon>
        </DocTab>
        <DocTools>
          <DocTool aria-label="新建标签"><svg width="9" height="9"><path d="M4.500 0V9M0 4.500H9" stroke="#000" strokeWidth="1.400" /></svg></DocTool>
          <DocTool aria-label="标签列表"><svg width="11" height="11"><path d="M0 1H11L8 7H3ZM6 7H10L8 10Z" fill="#111" /></svg></DocTool>
        </DocTools>
      </DocTabs>

      <Work>
        <Desk>
          <Paper>
            <Grain width="100%" height="100%" aria-hidden="true">
              <filter id="grain" x="0" y="0" width="100%" height="100%">
                <feTurbulence type="fractalNoise" baseFrequency="0.045 0.42" numOctaves="3" seed="7" />
                <feColorMatrix values="0 0 0 0 .80  0 0 0 0 .74  0 0 0 0 .73  0 .9 0 0 -.32" />
              </filter>
              <rect width="100%" height="100%" filter="url(#grain)" />
            </Grain>
            <PaperHead>
              <HeadLeft>完整乐谱</HeadLeft>
              <HeadMid>完整乐谱</HeadMid>
              <HeadRight>1</HeadRight>
            </PaperHead>
            <ScoreDrawing />
          </Paper>
        </Desk>
        <VScroll>
          <svg width="10" height="7" fill="none"><path d="M1 6L5 1.500L9 6" stroke="#555" strokeWidth="1.600" /></svg>
          <VThumb />
        </VScroll>

        <Keypad>
          <KeypadHead><span>小键盘</span><KeypadClose aria-label="关闭小键盘">×</KeypadClose></KeypadHead>
          <KeyStrip $cols={6}>
            {STRIP.map((g, i) => (
              <StripKey key={i} $on={i === 0} aria-label={`布局 ${i + 1}`}><Glyph w={18} h={16}>{g}</Glyph></StripKey>
            ))}
          </KeyStrip>
          <KeyGrid>
            {KEYS.map((k) => (
              <Key key={k.id} aria-label={k.id} $on={k.on} $cols={k.c} $rows={k.r}>{k.g}</Key>
            ))}
          </KeyGrid>
          <KeyStrip $cols={5}>
            {["1", "2", "3", "4", "All"].map((t) => (
              <StripKey key={t} $on={t === "1"}>{t}</StripKey>
            ))}
          </KeyStrip>
        </Keypad>

        <Monitor>
          <Ball>45%</Ball>
          <Pill>
            <svg width="8" height="28" viewBox="0 0 8 28" fill="none"><path d="M4 9V2M1 5L4 1L7 5" stroke="#e0524c" strokeWidth="1.800" /><path d="M4 18V26M1 23L4 27L7 23" stroke="#3cb05c" strokeWidth="1.800" /></svg>
            <Rates><span>1.5K/s</span><span>0.5K/s</span></Rates>
            <svg width="24" height="28" viewBox="0 0 24 28"><circle cx="10" cy="15" r="10" fill="#3b82d6" /><path d="M10 10V20M5 15H15" stroke="#fff" strokeWidth="2.400" /><circle cx="18" cy="8" r="5" fill="#dc2338" /></svg>
          </Pill>
        </Monitor>
      </Work>

      <Timeline>
        <TimelineHead>
          <span>时间线</span>
          <HeadButton aria-label="浮动"><svg width="9" height="9" fill="none"><path d="M.5 3.500H6.500V8.500H.5ZM2.500 3V.5H8.500V6.500H7" stroke="#000" /><path d="M0 4H7M2 1H9" stroke="#000" /></svg></HeadButton>
          <HeadButton aria-label="关闭"><svg width="9" height="9"><path d="M1 1L8 8M8 1L1 8" stroke="#000" strokeWidth="1.500" /></svg></HeadButton>
        </TimelineHead>
        <Lanes>
          {LANES.map((l) => (
            <Lane key={l.name}>
              <LaneName $bg={l.bg}>{l.name}</LaneName>
              <LaneTrack>
                {MEASURES.map((m) => (
                  <ChipCell key={m}>{m === 1 && <Chip $bg={l.bg}>{l.chip}</Chip>}</ChipCell>
                ))}
              </LaneTrack>
            </Lane>
          ))}
          <Lane $last>
            <LaneName $bg="#f3f3f3">小节序号</LaneName>
            <LaneTrack $numbers>{MEASURES.map((m) => <Measure key={m}>{m}</Measure>)}</LaneTrack>
          </Lane>
        </Lanes>
        <TimelineScroll>
          <PlainIcon aria-label="向左"><svg width="6" height="9" fill="none"><path d="M5 1L1.500 4.500L5 8" stroke="#aaa" strokeWidth="1.500" /></svg></PlainIcon>
          <PlainIcon aria-label="向右"><svg width="6" height="9" fill="none"><path d="M1 1L4.500 4.500L1 8" stroke="#aaa" strokeWidth="1.500" /></svg></PlainIcon>
        </TimelineScroll>
        <TimelineTools>
          {["M15.500 7V24M7 15.500H24", "M7 15.500H24"].map((d) => (
            <RoundTool key={d} aria-label="缩放时间线">
              <svg width="31" height="31" fill="none"><circle cx="15.500" cy="15.500" r="14.500" fill="#f3f3f3" stroke="#999" strokeWidth="1.500" /><path d={d} stroke="#888" strokeWidth="3.500" /></svg>
            </RoundTool>
          ))}
          <FitTool aria-label="适合宽度">
            <svg width="31" height="14" viewBox="0 0 31 14"><path d="M5 7H26" stroke="#6b1b84" strokeWidth="2.400" /><path d="M0 7L8 1V13ZM31 7L23 1V13Z" fill="#6b1b84" /></svg>
          </FitTool>
          <PlainIcon aria-label="设置">
            <svg width="29" height="32" viewBox="-16 -16 32 32" fill="none"><circle r="9" stroke="#6b1b84" strokeWidth="6" fill="#f6f0f8" /><circle r="13.500" stroke="#6b1b84" strokeWidth="4" strokeDasharray="3.800 3.270" /></svg>
          </PlainIcon>
        </TimelineTools>
      </Timeline>

      <Status>
        <StatusItem $w={83}>第 1/1 页</StatusItem>
        <StatusItem $w={66}>小节: 6</StatusItem>
        <StatusItem $w={74}>钢琴 (b)</StatusItem>
        <StatusItem $w={199}>小节 4，拍子 1 至小节末端</StatusItem>
        <StatusItem $w={139}>时间码：7.2"–9.6"</StatusItem>
        <StatusItem $w={115}>创建 连续区域</StatusItem>
        <StatusItem $w={81}>实际音高</StatusItem>
        <StatusRight>
          {VIEWS.map((d, i) => (
            <ViewButton key={d} $on={i === 0} aria-label={`视图 ${i + 1}`}><svg width="16" height="16" fill="none"><path d={d} stroke="#6b5a74" /></svg></ViewButton>
          ))}
          <ViewButton aria-label="全屏"><svg width="15" height="14"><rect x=".5" y=".5" width="14" height="13" fill="#bbb" stroke="#777" /><rect x="3" y="3" width="9" height="8" fill="#4a4658" /><path d="M3 8L7 5L12 6V11H3Z" fill="#c09aa0" /></svg></ViewButton>
          <Percent htmlFor="zoom">100.00%</Percent>
          <ZoomStep aria-label="缩小"><svg width="16" height="16" fill="none"><circle cx="8" cy="8" r="7.300" fill="#f3e6fa" stroke="#5b2a78" /><path d="M4 8H12" stroke="#3d1058" strokeWidth="2" /></svg></ZoomStep>
          <ZoomSlider id="zoom" type="range" defaultValue={50} />
          <ZoomStep aria-label="放大"><svg width="16" height="16" fill="none"><circle cx="8" cy="8" r="7.300" fill="#f3e6fa" stroke="#5b2a78" /><path d="M4 8H12M8 4V12" stroke="#3d1058" strokeWidth="2" /></svg></ZoomStep>
        </StatusRight>
      </Status>

      <Taskbar>
        <Task $w={60} aria-label="开始"><svg width="21" height="21"><path d="M0 3L9 1.800V10H0ZM10 1.600L21 0V10H10ZM0 11H9V19.200L0 18ZM10 11H21V21L10 19.400Z" fill="#fff" /></svg></Task>
        <Task $w={60} aria-label="任务视图"><svg width="21" height="20" fill="none"><path d="M1 0V3.500H13V0M1.500 6.500H12.500V13.500H1.500ZM1 20V16.500H13V20M18.500 0V20" stroke="#fff" /><path d="M17 7H20V12H17Z" fill="#fff" /></svg></Task>
        <Task $w={65} aria-label="应用">
          <svg width="28" height="28" viewBox="-14 -14 28 28">
            {[0, 72, 144, 216, 288].map((a) => (<path key={a} transform={`rotate(${a})`} d="M0 0C-7 -3 -8 -13 0 -13.500C7 -14 11 -9 9 -5C6 -8 1 -6 0 0Z" fill="#f0f0f0" stroke="#0c100d" strokeWidth="1" />))}
          </svg>
        </Task>
        <Task $w={65} $on aria-label="Internet Explorer"><EGlyph a="#3f9be8" b="#6db8f0" /></Task>
        <Task $w={70} aria-label="Edge">
          <svg width="28" height="28" viewBox="0 0 28 28"><path d="M2 12C4 4 9 1 15 1C23 1 27 7 26 16H10C11 22 18 24 24 20V25C16 29 5 27 5 18C5 14 8 11 11 10C10 11 10 12 10 12H19C19 4 8 5 2 12Z" fill="#1681dc" /></svg>
        </Task>
        <Task $w={58} $run aria-label="文件资源管理器">
          <svg width="28" height="24"><path d="M0 1H10L12 4H28V23H0Z" fill="#f2cf69" /><path d="M0 6H28V23H0Z" fill="#fbe59b" /><path d="M6 23V13H22V23H18V18H10V23Z" fill="#48b4dd" /></svg>
        </Task>
        <Task $w={64} $run aria-label="浏览器"><EGlyph a="#fff" b="#c9f2a8" ring /></Task>
        <Task $w={61} $run aria-label="安全卫士"><svg width="30" height="30" viewBox="0 0 30 30"><circle cx="15" cy="15" r="14" fill="#fbc61c" /><path d="M15 1A14 14 0 0 1 22 27C10 24 22 12 15 1Z" fill="#8ccb2c" /><path d="M15 7V23M7 15H23" stroke="#1f8a3c" strokeWidth="6" /></svg></Task>
        <Task $w={62} $run aria-label="LIVE">
          <svg width="30" height="30" viewBox="0 0 30 30"><rect x=".5" y=".5" width="29" height="29" rx="2" fill="#9bdcf3" stroke="#e6f6fc" /><text x="2" y="8" fontFamily="Liberation Sans, sans-serif" fontWeight="700" fontSize="7" fill="#1588bd">LIVE</text><circle cx="23" cy="5" r="3.500" fill="#fff" stroke="#2b4660" /><path d="M4 14C8 6 22 6 26 13L28 24L22 20L8 21L3 26Z" fill="#3bb5dd" /><circle cx="14" cy="18" r="6" fill="#fbeee8" /><path d="M8 16L14 11L20 16L19 11L10 10Z" fill="#4fc4ea" /><circle cx="12" cy="18" r="1" fill="#a33" /><circle cx="17" cy="18" r="1" fill="#a33" /><path d="M9 29L12 23H17L20 29Z" fill="#f5f5f5" /></svg>
        </Task>
        <Task $w={61} $run $on aria-label="Sibelius"><SibeliusMark size={30} /></Task>
        <Tray>
          <TrayButton $w={44} aria-label="人脉"><svg width="18" height="19" fill="none"><circle cx="13" cy="4" r="3.200" stroke="#fff" strokeWidth="1.300" /><circle cx="5.500" cy="8.500" r="3" stroke="#fff" strokeWidth="1.300" /><path d="M1 18C1 11 9 11 10 18M10 10C13 7 17 9 17 13" stroke="#fff" strokeWidth="1.300" /></svg></TrayButton>
          <TrayButton $w={46} aria-label="显示隐藏的图标"><svg width="16" height="9" fill="none"><path d="M1 8L8 1L15 8" stroke="#fff" strokeWidth="1.300" /></svg></TrayButton>
          <TrayButton $w={20} aria-label="电池"><svg width="20" height="14" fill="none"><path d="M4.500 3.500H17.500V12.500H4.500Z" fill="#fff" stroke="#fff" /><path d="M18 6H20V10H18Z" fill="#fff" /><path d="M0 2H6M1 0V2M5 0V2M1 2V5H5V2M3 5V9" stroke="#fff" /></svg></TrayButton>
          <TrayButton $w={42} aria-label="网络"><svg width="16" height="16" fill="none"><path d="M1 15C1 7 7 1 15 1M5 15C5 9 9 5 15 5M9 15C9 12 12 9 15 9" stroke="#bbb" strokeWidth="1.300" /><circle cx="14" cy="14" r="2" fill="#fff" /></svg></TrayButton>
          <TrayButton $w={20} aria-label="音量"><svg width="20" height="16" fill="none"><path d="M1 5.500H4L8 2V14L4 10.500H1Z" stroke="#fff" strokeWidth="1.200" /><path d="M11 5Q13 8 11 11M14 3Q17 8 14 13M17 1Q21 8 17 15" stroke="#fff" /></svg></TrayButton>
          <TrayButton $w={38}>中</TrayButton>
          <TrayButton $w={32} $after={7} aria-label="搜狗输入法"><svg width="20" height="20"><rect x="1" y="1" width="18" height="18" rx="4" transform="rotate(-8 10 10)" fill="#e14a26" /><path d="M14 6C9 4 6 6 7 8C8 10 13 9 13 12C13 15 8 15 6 13" stroke="#fff" strokeWidth="2.600" fill="none" /></svg></TrayButton>
          <Clock>10:06<br />2019/1/11</Clock>
          <TrayButton $w={50} $after={9} aria-label="通知"><svg width="20" height="20" fill="none"><path d="M.5 .5H19.500V15.500H12.500L9.500 18.500L7 15.500H.5Z" stroke="#fff" strokeWidth="1.200" /></svg></TrayButton>
          <ShowDesktop aria-label="显示桌面" />
        </Tray>
      </Taskbar>
    </Shell>
  );
}
